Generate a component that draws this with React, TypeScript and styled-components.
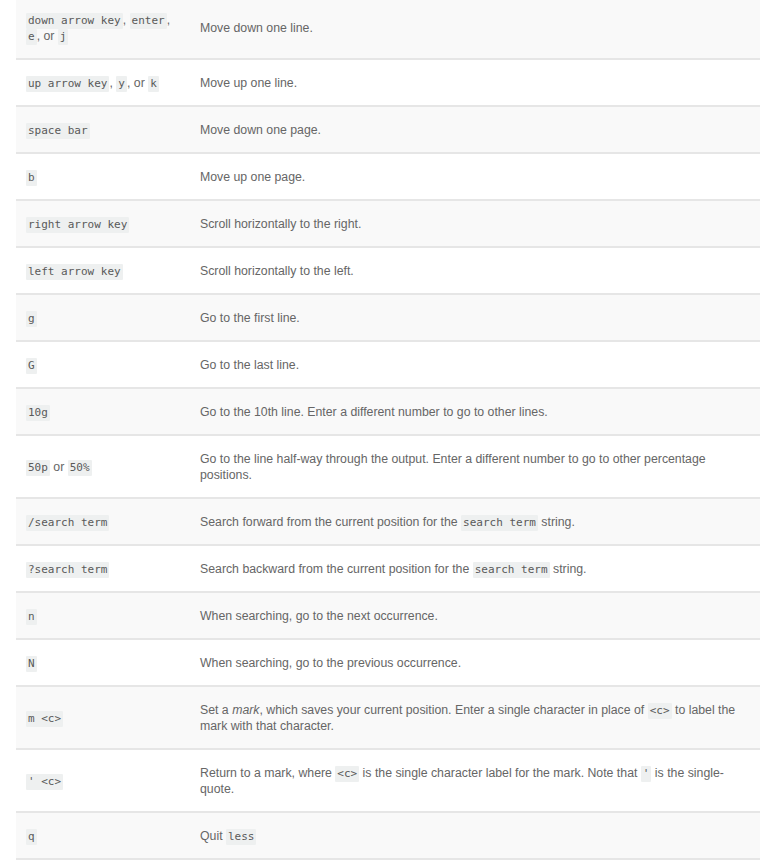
import React from "react";
import styled, { createGlobalStyle } from "styled-components";

const Global = createGlobalStyle`
  html, body { margin: 0; padding: 0; background: #ffffff; }
  body { font-family: "Liberation Sans", Arial, sans-serif; }
`;

const Page = styled.div`
  padding: 0 8px 0 16px;
  overflow: hidden;
`;

const Table = styled.table`
  width: 100%;
  margin-top: -3px;
  border-collapse: collapse;
  font-size: 12.3px;
  line-height: 16px;
  color: #666666;
`;

const Row = styled.tr<{ $shade: boolean }>`
  background: ${(p) => (p.$shade ? "#f9f9f9" : "#ffffff")};
  border-bottom: 2px solid #e6e6e6;
`;

const KeyCell = styled.td`
  width: 154px;
  padding: 15px 10px 14px 10px;
  vertical-align: middle;
`;

const DescCell = styled.td`
  padding: 15px 20px 14px 10px;
  vertical-align: middle;
`;

const Code = styled.code`
  font-family: "DejaVu Sans Mono", "Liberation Mono", monospace;
  font-size: 11px;
  line-height: 1;
  color: #595959;
  background: #eef0f0;
  padding: 1px 2px 2px 2px;
  border-radius: 1px;
`;

type RowData = { key: React.ReactNode; desc: React.ReactNode };

const rows: RowData[] = [
  {
    key: (
      <>
        <Code>down arrow key</Code>, <Code>enter</Code>, <Code>e</Code>, or <Code>j</Code>
      </>
    ),
    desc: "Move down one line.",
  },
  {
    key: (
      <>
        <Code>up arrow key</Code>, <Code>y</Code>, or <Code>k</Code>
      </>
    ),
    desc: "Move up one line.",
  },
  { key: <Code>space bar</Code>, desc: "Move down one page." },
  { key: <Code>b</Code>, desc: "Move up one page." },
  { key: <Code>right arrow key</Code>, desc: "Scroll horizontally to the right." },
  { key: <Code>left arrow key</Code>, desc: "Scroll horizontally to the left." },
  { key: <Code>g</Code>, desc: "Go to the first line." },
  { key: <Code>G</Code>, desc: "Go to the last line." },
  {
    key: <Code>10g</Code>,
    desc: "Go to the 10th line. Enter a different number to go to other lines.",
  },
  {
    key: (
      <>
        <Code>50p</Code> or <Code>50%</Code>
      </>
    ),
    desc: "Go to the line half-way through the output. Enter a different number to go to other percentage positions.",
  },
  {
    key: <Code>/search term</Code>,
    desc: (
      <>
        Search forward from the current position for the <Code>search term</Code> string.
      </>
    ),
  },
  {
    key: <Code>?search term</Code>,
    desc: (
      <>
        Search backward from the current position for the <Code>search term</Code> string.
      </>
    ),
  },
  { key: <Code>n</Code>, desc: "When searching, go to the next occurrence." },
  { key: <Code>N</Code>, desc: "When searching, go to the previous occurrence." },
  {
    key: <Code>m &lt;c&gt;</Code>,
    desc: (
      <>
        Set a <em>mark</em>, which saves your current position. Enter a single character in
        place of <Code>&lt;c&gt;</Code> to label the mark with that character.
      </>
    ),
  },
  {
    key: <Code>' &lt;c&gt;</Code>,
    desc: (
      <>
        Return to a mark, where <Code>&lt;c&gt;</Code> is the single character label for the
        mark. Note that <Code>'</Code> is the single-quote.
      </>
    ),
  },
  {
    key: <Code>q</Code>,
    desc: (
      <>
        Quit <Code>less</Code>
      </>
    ),
  },
];

export default function App() {
  return (
    <>
      <Global />
      <Page>
        <Table>
          <tbody>
            {rows.map((r, i) => (
              <Row key={i} $shade={i % 2 === 0}>
                <KeyCell>{r.key}</KeyCell>
                <DescCell>{r.desc}</DescCell>
              </Row>
            ))}
          </tbody>
        </Table>
      </Page>
    </>
  );
}
